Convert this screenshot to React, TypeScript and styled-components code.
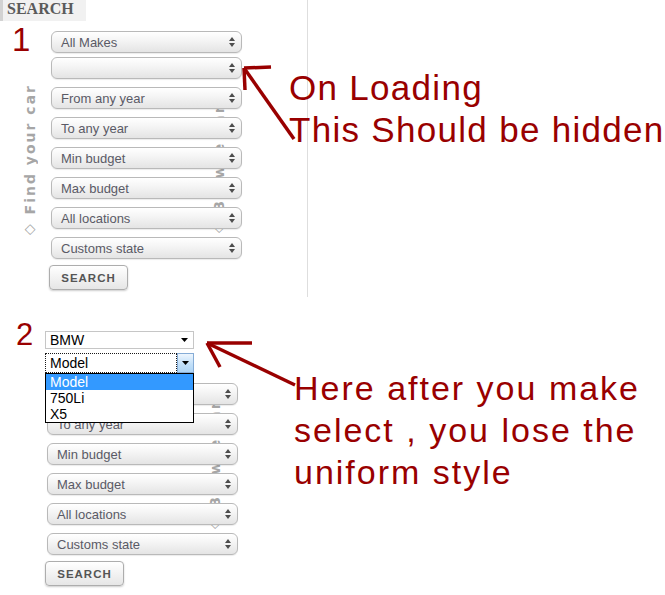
import React from "react";
import styled, { createGlobalStyle } from "styled-components";

type Point = [number, number];

type ArrowProps = {
  tip: Point;
  heads: Point[];
  tail: Point;
};

const GlobalStyle = createGlobalStyle`
  body {
    margin: 0;
    background: #ffffff;
    font-family: "Liberation Sans", Arial, sans-serif;
  }
`;

const Page = styled.main`
  width: 665px;
  height: 595px;
  overflow: hidden;
  display: flex;
  flex-direction: column;
`;

const Shot = styled.section<{ $height: number }>`
  position: relative;
  height: ${(p) => p.$height}px;
  display: flex;
  flex-shrink: 0;
`;

const Sidebar = styled.aside`
  width: 307px;
  border-right: 1px solid #dedede;
  display: flex;
  flex-direction: column;
  align-items: flex-start;
`;

const Header = styled.h2`
  margin: 0;
  height: 21px;
  line-height: 21px;
  padding: 0 12px 0 4px;
  border-left: 3px solid #d2d2d2;
  background: #f1f1f1;
  font: bold 16px "Liberation Serif", "Times New Roman", serif;
  color: #5b5b5b;
`;

const Body = styled.div`
  display: flex;
  margin-top: 10px;
`;

const Rail = styled.div`
  width: 51px;
  box-sizing: border-box;
  padding: 53px 0 0 22px;
`;

const VerticalTab = styled.span`
  display: inline-block;
  writing-mode: vertical-rl;
  transform: rotate(180deg);
  font: bold 14px "DejaVu Sans", Verdana, sans-serif;
  letter-spacing: 2px;
  line-height: 16px;
  color: #a6a6a6;
  white-space: nowrap;
`;

const HiddenTab = styled(VerticalTab)`
  position: absolute;
  left: 160px;
  bottom: 22px;
  z-index: 0;
`;

const Form = styled.form<{ $indent: number; $top: number }>`
  display: flex;
  flex-direction: column;
  align-items: flex-start;
  margin: 0 0 0 ${(p) => p.$indent}px;
  padding-top: ${(p) => p.$top}px;
`;

const Fields = styled.div<{ $shift?: number; $top?: number }>`
  position: relative;
  display: flex;
  flex-direction: column;
  gap: 8px;
  width: 191px;
  margin-left: ${(p) => p.$shift ?? 0}px;
  margin-top: ${(p) => p.$top ?? 0}px;
`;

const Select = styled.div<{ $tight?: boolean }>`
  position: relative;
  z-index: 1;
  box-sizing: border-box;
  width: 191px;
  height: 22px;
  margin-bottom: ${(p) => (p.$tight ? -4 : 0)}px;
  padding: 0 6px 0 9px;
  display: flex;
  align-items: center;
  justify-content: space-between;
  border: 1px solid #b9b9b9;
  border-radius: 6px;
  background: linear-gradient(#ffffff 0%, #f4f4f4 45%, #e4e4e4 100%);
  box-shadow: 0 1px 1px rgba(0, 0, 0, 0.08);
  font-size: 13px;
  color: #5a5a66;
`;

const SearchButton = styled.button<{ $shift: number }>`
  margin: 6px 0 0 ${(p) => p.$shift}px;
  width: 79px;
  height: 25px;
  padding: 0;
  border: 1px solid #adadad;
  border-radius: 4px;
  background: linear-gradient(#ffffff, #e6e6e6);
  box-shadow: 0 1px 2px rgba(0, 0, 0, 0.2);
  font: bold 11.5px "Liberation Sans", Arial, sans-serif;
  letter-spacing: 1px;
  color: #555555;
`;

const NativeStack = styled.div`
  position: relative;
  z-index: 2;
  display: flex;
  flex-direction: column;
  gap: 4px;
  width: 149px;
`;

const NativeSelect = styled.div`
  box-sizing: border-box;
  height: 18px;
  padding: 0 5px 0 4px;
  display: flex;
  align-items: center;
  justify-content: space-between;
  border: 1px solid #c6c6c6;
  background: #ffffff;
  font-size: 14px;
  color: #000000;
`;

const FocusedSelect = styled.div`
  height: 20px;
  display: flex;
`;

const FocusField = styled.div`
  flex: 1;
  box-sizing: border-box;
  padding-left: 4px;
  display: flex;
  align-items: center;
  border: 1px dotted #1a1a1a;
  background: #ffffff;
  font-size: 14px;
  color: #000000;
`;

const DropButton = styled.div`
  width: 17px;
  box-sizing: border-box;
  display: flex;
  align-items: center;
  justify-content: center;
  border: 1px solid #86acd6;
  background: linear-gradient(#eef6fe, #c3e0f9 55%, #aed4f5);
`;

const OptionList = styled.ul`
  position: absolute;
  top: 100%;
  left: 0;
  width: 149px;
  box-sizing: border-box;
  margin: 0;
  padding: 0;
  list-style: none;
  border: 1px solid #000000;
  background: #ffffff;
`;

const Option = styled.li<{ $active?: boolean }>`
  height: 16px;
  line-height: 16px;
  padding-left: 4px;
  font-size: 14px;
  background: ${(p) => (p.$active ? "#3399ff" : "transparent")};
  color: ${(p) => (p.$active ? "#ffffff" : "#000000")};
`;

const Numeral = styled.span<{ $top: number; $left: number; $size: number }>`
  position: absolute;
  top: ${(p) => p.$top}px;
  left: ${(p) => p.$left}px;
  font-size: ${(p) => p.$size}px;
  line-height: ${(p) => p.$size}px;
  color: #990000;
`;

const Note = styled.p<{ $top: number; $left: number; $size: number; $spacing: number }>`
  position: absolute;
  top: ${(p) => p.$top}px;
  left: ${(p) => p.$left}px;
  margin: 0;
  font-size: ${(p) => p.$size}px;
  letter-spacing: ${(p) => p.$spacing}px;
  line-height: 42px;
  white-space: nowrap;
  color: #990000;
`;

const ArrowLayer = styled.svg`
  position: absolute;
  left: 0;
  top: 0;
  width: 665px;
  height: 100%;
  overflow: visible;
  pointer-events: none;
  z-index: 3;
`;

function Arrow({ tip, heads, tail }: ArrowProps) {
  const lines = [tail, ...heads];
  return (
    <ArrowLayer>
      {lines.map(([x, y], i) => (
        <line
          key={i}
          x1={tip[0]}
          y1={tip[1]}
          x2={x}
          y2={y}
          stroke="#990000"
          strokeWidth={3.5}
        />
      ))}
    </ArrowLayer>
  );
}

function UpDown() {
  return (
    <svg width="6" height="10" viewBox="0 0 6 10">
      <path d="M3 0 L6 4 H0 Z M0 6 H6 L3 10 Z" fill="#4d4d4d" />
    </svg>
  );
}

function Caret() {
  return (
    <svg width="7" height="4" viewBox="0 0 7 4">
      <path d="M0 0 H7 L3.5 4 Z" fill="#000000" />
    </svg>
  );
}

const lowerFields = [
  "To any year",
  "Min budget",
  "Max budget",
  "All locations",
  "Customs state",
];

export default function App() {
  return (
    <Page>
      <GlobalStyle />

      <Shot $height={297}>
        <Sidebar>
          <Header>SEARCH</Header>
          <Body>
            <Rail>
              <VerticalTab>◇ Find your car</VerticalTab>
            </Rail>
            <Form $indent={0} $top={0}>
              <Fields>
                <HiddenTab>◇ Browse cars</HiddenTab>
                <Select $tight>
                  <span>All Makes</span>
                  <UpDown />
                </Select>
                <Select>
                  <span />
                  <UpDown />
                </Select>
                <Select>
                  <span>From any year</span>
                  <UpDown />
                </Select>
                {lowerFields.map((label) => (
                  <Select key={label}>
                    <span>{label}</span>
                    <UpDown />
                  </Select>
                ))}
              </Fields>
              <SearchButton type="button" $shift={-2}>
                SEARCH
              </SearchButton>
            </Form>
          </Body>
        </Sidebar>
        <Numeral $top={23} $left={12} $size={33}>
          1
        </Numeral>
        <Arrow tip={[244, 68]} heads={[[271, 67], [245, 90]]} tail={[294, 139]} />
        <Note $top={67} $left={289} $size={35} $spacing={1.3}>
          On Loading
          <br />
          This Should be hidden
        </Note>
      </Shot>

      <Shot $height={298}>
        <Form $indent={45} $top={34}>
          <NativeStack>
            <NativeSelect>
              <span>BMW</span>
              <Caret />
            </NativeSelect>
            <FocusedSelect>
              <FocusField>Model</FocusField>
              <DropButton>
                <Caret />
              </DropButton>
            </FocusedSelect>
            <OptionList>
              <Option $active>Model</Option>
              <Option>750Li</Option>
              <Option>X5</Option>
            </OptionList>
          </NativeStack>
          <Fields $shift={2} $top={10}>
            <HiddenTab>◇ Browse cars</HiddenTab>
            <Select>
              <span>From any year</span>
              <UpDown />
            </Select>
            {lowerFields.map((label) => (
              <Select key={label}>
                <span>{label}</span>
                <UpDown />
              </Select>
            ))}
          </Fields>
          <SearchButton type="button" $shift={0}>
            SEARCH
          </SearchButton>
        </Form>
        <Numeral $top={22} $left={16} $size={31}>
          2
        </Numeral>
        <Arrow tip={[207, 46]} heads={[[252, 46], [220, 70]]} tail={[295, 88]} />
        <Note $top={70} $left={294} $size={34} $spacing={2}>
          Here after you make
          <br />
          select , you lose the
          <br />
          uniform style
        </Note>
      </Shot>
    </Page>
  );
}
